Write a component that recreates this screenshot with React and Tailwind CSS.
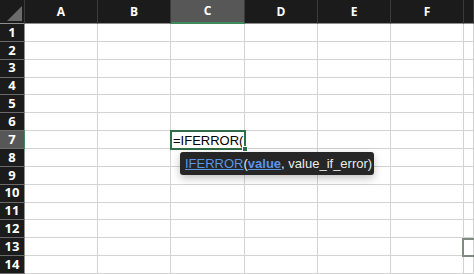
import React from 'react';

const COLS = ['A', 'B', 'C', 'D', 'E', 'F', ''];
const ROWS = Array.from({ length: 14 }, (_, i) => i + 1);

function Corner() {
  return (
    <div className="bg-[#1b1b1b] border-r border-b border-r-[#3a3a3a] border-b-[#8f8f8f] relative">
      <svg width="25" height="24" className="absolute left-0 top-0">
        <polygon points="7,21 22,21 22,6" fill="#6b6b6b" />
      </svg>
    </div>
  );
}

function ColHeader({ label }) {
  const active = label === 'C';
  return (
    <div
      className={
        active
          ? 'bg-[#575757] border-r border-r-[#3a3a3a] border-b-2 border-b-[#3f8a5c] flex items-center justify-center text-white text-[12px] font-bold'
          : 'bg-[#1b1b1b] border-r border-r-[#3a3a3a] border-b border-b-[#8f8f8f] flex items-center justify-center text-white text-[12px] font-bold'
      }
    >
      {label}
    </div>
  );
}

function RowHeader({ n }) {
  const active = n === 7;
  return (
    <div
      className={
        active
          ? 'bg-[#575757] border-b border-b-[#6a6a6a] border-r border-r-[#3f8a5c] flex items-center justify-center text-white text-[13px] font-bold'
          : 'bg-[#1b1b1b] border-b border-b-[#6a6a6a] border-r border-r-[#8f8f8f] flex items-center justify-center text-white text-[13px] font-bold'
      }
    >
      {n}
    </div>
  );
}

export default function App() {
  return (
    <div
      className="relative w-[474px] h-[274px] overflow-hidden bg-white"
      style={{ fontFamily: '"Open Sans", "Liberation Sans", sans-serif' }}
    >
      {/* sheet grid */}
      <div className="grid grid-cols-[25px_73px_73px_74px_73px_73px_73px_1fr] grid-rows-[24px_repeat(14,17.86px)] h-full">
        <Corner />
        {COLS.map((c, i) => (
          <ColHeader key={i} label={c} />
        ))}
        {ROWS.map(n => (
          <React.Fragment key={n}>
            <RowHeader n={n} />
            {COLS.map((c, i) => (
              <div key={i} className="border-r border-b border-[#d3d3d3] bg-white" />
            ))}
          </React.Fragment>
        ))}
      </div>

      {/* active cell C7 */}
      <div className="absolute left-[170px] top-[130px] w-[76px] h-[20px] border-2 border-[#2f6e46] flex items-center pl-[1px]">
        <span className="text-[13px] text-black leading-none" style={{ fontFamily: '"Liberation Sans", Arial, sans-serif' }}>
          =IFERROR(
        </span>
        <span className="ml-[1px] w-px h-[14px] bg-black" />
        <div className="absolute -right-[4px] -bottom-[4px] w-[6px] h-[6px] bg-[#2f6e46] border border-white" />
      </div>

      {/* function hint tooltip */}
      <div
        className="absolute left-[180px] top-[152px] w-[194px] h-[23px] bg-[#262626] rounded-[3px] shadow-[0_3px_8px_rgba(0,0,0,0.25)] flex items-center pl-[5px] text-[13px] text-[#ececec]"
        style={{ fontFamily: '"Liberation Sans", Arial, sans-serif' }}
      >
        <span className="text-[#5b95e6] underline">IFERROR</span>
        <span>(</span>
        <span className="text-[#5b95e6] underline font-bold">value</span>
        <span>, value_if_error)</span>
      </div>

      {/* partial selection at right edge */}
      <div className="absolute left-[462px] top-[238px] w-[20px] h-[19px] border-2 border-[#7f8a82]" />
    </div>
  );
}
